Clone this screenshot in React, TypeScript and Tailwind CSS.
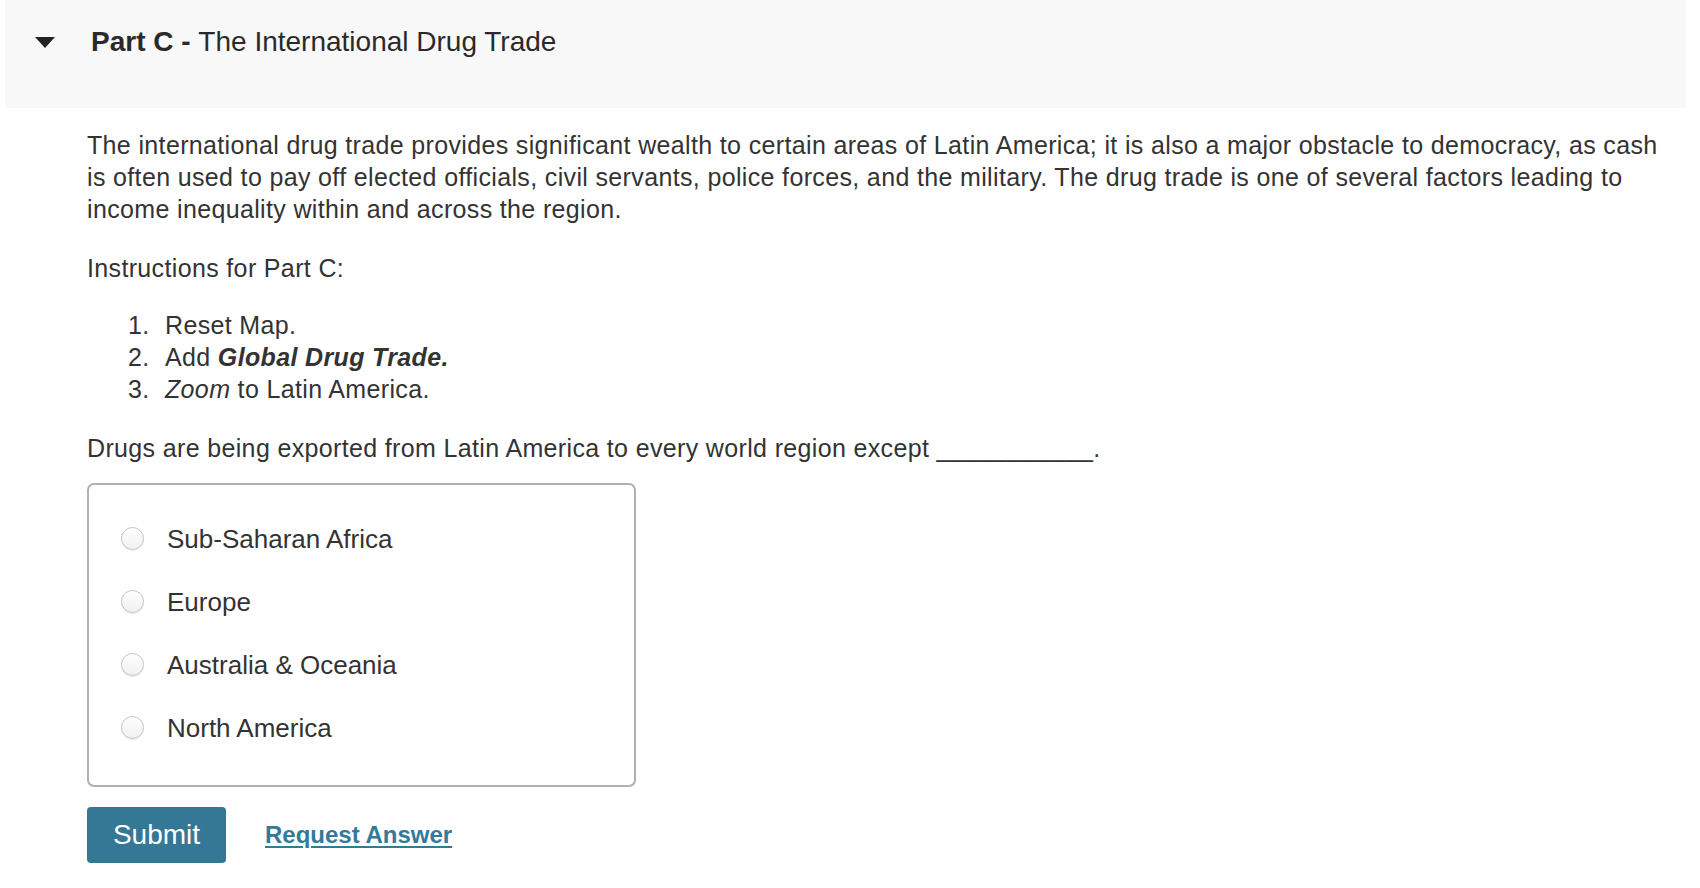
import React from "react";

const options = ["Sub-Saharan Africa", "Europe", "Australia & Oceania", "North America"];

export default function App() {
  return (
    <div className="min-h-[888px] bg-white text-[#333333]" style={{ fontFamily: '"Liberation Sans", Arial, sans-serif' }}>
      <div className="ml-[5px] mr-[14px]">
        <div className="flex h-[108px] items-start bg-[#f8f8f8]">
          <div className="flex h-[84px] items-center">
            <svg className="ml-[30px] mr-[36px]" width="20" height="11" viewBox="0 0 20 11">
              <polygon points="0,0 20,0 10,11" fill="#222222" />
            </svg>
            <div className="text-[28px] leading-[32px] text-[#2a2a2a]">
              <span className="font-bold">Part C - </span>
              <span>The International Drug Trade</span>
            </div>
          </div>
        </div>
        <div className="pl-[82px] pr-[12px] text-[25px] leading-[32px] tracking-[0.35px]">
          <p className="mt-[21px]">
            The international drug trade provides significant wealth to certain areas of Latin America; it is also a major obstacle to democracy, as cash is often used to pay off elected officials, civil servants, police forces, and the military. The drug trade is one of several factors leading to income inequality within and across the region.
          </p>
          <p className="mt-[27px]">Instructions for Part C:</p>
          <ol className="mt-[25px] flex flex-col">
            <li className="flex">
              <span className="w-[78px] pl-[41px]">1.</span>
              <span>Reset Map.</span>
            </li>
            <li className="flex">
              <span className="w-[78px] pl-[41px]">2.</span>
              <span>
                Add <b className="italic">Global Drug Trade.</b>
              </span>
            </li>
            <li className="flex">
              <span className="w-[78px] pl-[41px]">3.</span>
              <span>
                <i>Zoom</i> to Latin America.
              </span>
            </li>
          </ol>
          <p className="mt-[27px]">Drugs are being exported from Latin America to every world region except ___________.</p>
          <div className="mt-[19px] flex h-[304px] w-[549px] flex-col rounded-[7px] border-2 border-[#b0b0b0] pt-[22px] tracking-normal">
            {options.map((o) => (
              <label key={o} className="flex h-[63px] items-center">
                <span className="ml-[32px] h-[23px] w-[23px] shrink-0 rounded-full border border-[#c4c4c4] bg-gradient-to-b from-white to-[#f0f0f0] shadow-[0_1px_1px_rgba(0,0,0,0.08)]" />
                <span className="ml-[23px] text-[26px]">{o}</span>
              </label>
            ))}
          </div>
          <div className="mt-[20px] flex items-center tracking-normal">
            <button className="flex h-[56px] w-[139px] items-center justify-center rounded-[4px] bg-[#347896] text-[28px] text-white">
              Submit
            </button>
            <a className="ml-[39px] text-[24px] font-bold text-[#33799a] underline decoration-[2px] underline-offset-[3px]" href="#">
              Request Answer
            </a>
          </div>
        </div>
      </div>
    </div>
  );
}
